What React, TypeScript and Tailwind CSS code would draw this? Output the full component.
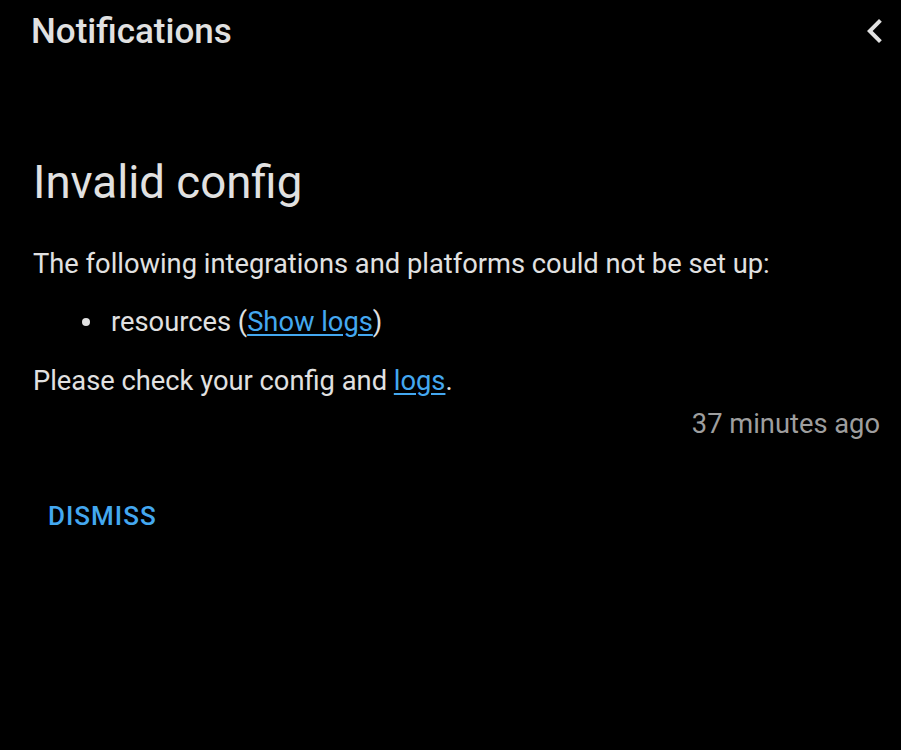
export default function App() {
  return (
    <div className="w-[901px] h-[750px] bg-black text-[#e1e1e1] font-['Roboto',sans-serif] overflow-hidden">
      <div className="flex items-center justify-between h-[62px] pl-[31px] pr-[2px]">
        <div className="text-[35px] font-medium text-[#e1e1e1] pt-[2px]">Notifications</div>
        <button className="w-[48px] h-[48px] flex items-center justify-center text-[#e1e1e1]">
          <svg width="48" height="48" viewBox="0 0 24 24" fill="currentColor">
            <path d="M15.41,16.58L10.83,12L15.41,7.41L14,6L8,12L14,18L15.41,16.58Z" />
          </svg>
        </button>
      </div>

      <div className="pl-[33px] pr-[21px] pt-[89px]">
        <div className="text-[45.6px] leading-[64px] text-[#e1e1e1]">Invalid config</div>
        <div className="mt-[29px] text-[27.3px] leading-[40px]">
          <p>The following integrations and platforms could not be set up:</p>
          <ul className="pl-[49px] mt-[18px] mb-[19px]">
            <li className="flex items-center leading-[40px]">
              <span className="w-[8px] h-[8px] rounded-full bg-[#e1e1e1] mr-[21px]" />
              <span>
                resources (
                <a className="text-[#44a8f0] underline underline-offset-[3px]">Show logs</a>)
              </span>
            </li>
          </ul>
          <p>
            Please check your config and <a className="text-[#44a8f0] underline underline-offset-[3px]">logs</a>.
          </p>
        </div>
        <div className="text-right text-[27.3px] leading-[40px] text-[#9e9e9e] mt-[3px]">37 minutes ago</div>
        <div className="mt-[53px] pl-[15px]">
          <button className="text-[26px] font-medium tracking-[1px] text-[#44a8f0]">DISMISS</button>
        </div>
      </div>
    </div>
  );
}
